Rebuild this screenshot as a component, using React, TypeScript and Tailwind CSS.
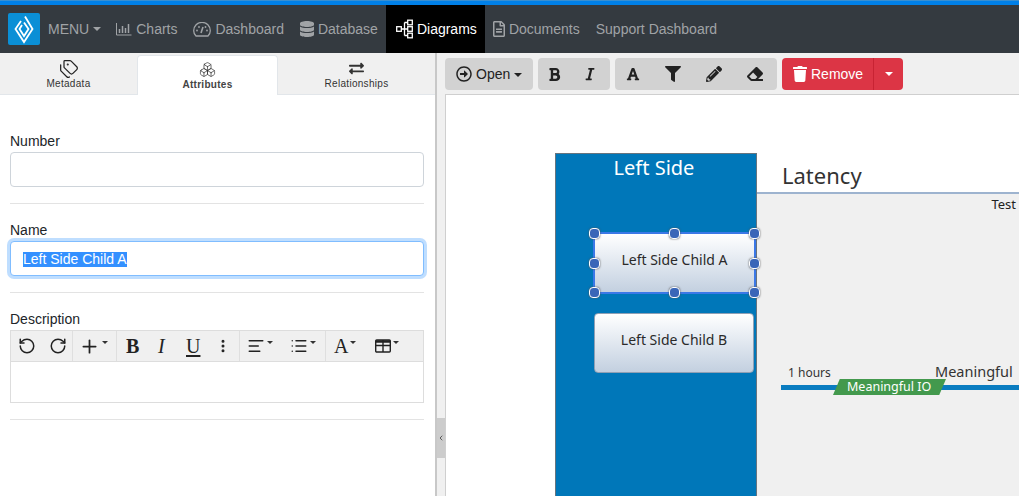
import React from "react";
import { FaDatabase, FaRegFileAlt, FaExchangeAlt, FaRegArrowAltCircleRight, FaBold, FaItalic, FaFont, FaFilter, FaPencilAlt, FaEraser, FaTrash } from "react-icons/fa";
import { RotateCcw, RotateCw, Plus, EllipsisVertical, AlignLeft, List, Tags, Boxes, ChevronLeft } from "lucide-react";

const Caret = ({ className = "" }: { className?: string }) => (
  <span className={"inline-block w-0 h-0 border-x-[4px] border-x-transparent border-t-[4px] border-t-current " + className} />
);

const TinyCaret = () => (
  <span className="inline-block w-0 h-0 border-x-[3px] border-x-transparent border-t-[3px] border-t-[#333] ml-[2px] mb-2" />
);

const ChartIcon = () => (
  <svg width="16" height="14" viewBox="0 0 16 14" fill="none" stroke="currentColor" strokeWidth="1">
    <path d="M.5 1v12h15" />
    <path d="M3.5 7v4M6.5 4v7M9.5 6v5M12.5 2v9" strokeWidth="1.5" />
  </svg>
);

const GaugeIcon = () => (
  <svg width="18" height="15" viewBox="0 0 18 15" fill="none" stroke="currentColor">
    <path d="M3 14C1.6 12.6.7 10.8.7 8.7a8.3 8.3 0 0 1 16.6 0c0 2.1-.9 3.9-2.3 5.3z" strokeWidth="1.3" />
    <path d="M8 11l2-6" strokeWidth="1.6" />
    <circle cx="4" cy="8.5" r=".9" fill="currentColor" stroke="none" />
    <circle cx="6" cy="5" r=".9" fill="currentColor" stroke="none" />
    <circle cx="14" cy="8.5" r=".9" fill="currentColor" stroke="none" />
    <circle cx="12.5" cy="5" r=".9" fill="currentColor" stroke="none" />
  </svg>
);

const DiagramIcon = () => (
  <svg width="17" height="20" viewBox="0 0 17 20" fill="none" stroke="currentColor" strokeWidth="1.3">
    <rect x=".7" y="7.7" width="4.6" height="4.6" />
    <rect x="11.7" y="1.2" width="4.6" height="4.6" />
    <rect x="11.7" y="7.7" width="4.6" height="4.6" />
    <rect x="11.7" y="14.2" width="4.6" height="4.6" />
    <path d="M5.3 10h6.4M8.5 3.5v13M8.5 3.5h3.2M8.5 16.5h3.2" />
  </svg>
);

const TableIcon = () => (
  <svg width="16" height="14" viewBox="0 0 16 14" fill="none" stroke="currentColor" strokeWidth="1.4">
    <rect x=".7" y="1" width="14.6" height="12" rx="1" />
    <path d="M.7 6.5h14.6M8 1v12" />
    <path d="M.7 2.5h14.6" strokeWidth="2.5" />
  </svg>
);

const Logo = () => (
  <div className="w-8 h-8 rounded-[2px] bg-[#0a8fd6] flex items-center justify-center">
    <svg width="20" height="30" viewBox="0 0 20 30" fill="none" stroke="white" strokeWidth="1.8">
      <path d="M11 2.5 L18.5 15 L10 28 L1.5 15 L7 7 M10 8.5 L14.5 15 L10 22 L5.5 15 L8 11" />
    </svg>
  </div>
);

const NavItem = ({ icon, label }: { icon?: React.ReactNode; label: string }) => (
  <div className="flex items-center gap-[4px] px-2">
    {icon}
    <span>{label}</span>
  </div>
);

const Tab = ({ icon, label, active }: { icon: React.ReactNode; label: string; active?: boolean }) => (
  <div
    className={
      "flex flex-col items-center pt-[4px] text-[10px] leading-[12px] tracking-[0.3px] " +
      (active
        ? "w-[141px] h-[40px] bg-white border border-b-0 border-[#e2e6ea] rounded-t-[4px] font-bold text-[#444]"
        : "flex-1 h-[39px] text-[#333]")
    }
  >
    <span className="h-[19px] flex items-center">{icon}</span>
    <span>{label}</span>
  </div>
);

const Divider = () => <div className="h-px bg-[#e3e3e3]" />;

const Group = ({ children, className = "" }: { children: React.ReactNode; className?: string }) => (
  <div className={"h-[32px] rounded-[4px] bg-[#d2d2d2] flex items-center text-[#222] " + className}>{children}</div>
);

const EdSection = ({ children, className = "" }: { children: React.ReactNode; className?: string }) => (
  <div className={"h-full flex items-center border-r border-[#dfdfdf] " + className}>{children}</div>
);

const Handle = ({ className }: { className: string }) => (
  <span className={"absolute w-[11px] h-[11px] rounded-[4px] bg-[#3a66b8] border-[1.5px] border-white shadow-[0_0_2px_#555] " + className} />
);

const Node = ({ label, selected }: { label: string; selected?: boolean }) => (
  <div
    className={
      "relative flex items-center justify-center text-[14px] text-[#2a2a2a] bg-gradient-to-b from-white to-[#c3d0e0] " +
      (selected ? "h-[62px] w-[163px] -ml-px border-2 border-[#3b78e7]" : "h-[60px] w-[160px] border border-[#8fa0b5] rounded-[4px]")
    }
  >
    <span className="mb-[7px]">{label}</span>
    {selected && (
      <>
        <Handle className="-left-[6px] -top-[6px]" />
        <Handle className="left-[74px] -top-[6px]" />
        <Handle className="-right-[6px] -top-[6px]" />
        <Handle className="-left-[6px] top-[24px]" />
        <Handle className="-right-[6px] top-[24px]" />
        <Handle className="-left-[6px] -bottom-[6px]" />
        <Handle className="left-[74px] -bottom-[6px]" />
        <Handle className="-right-[6px] -bottom-[6px]" />
      </>
    )}
  </div>
);

export default function App() {
  return (
    <div className="w-[1019px] h-[496px] overflow-hidden flex flex-col bg-white font-['Liberation_Sans',sans-serif] text-[14px] text-[#212529]">
      <div className="h-[5px] shrink-0 bg-[#0080e8] border-t border-t-[#3a8fd0]" />
      <nav className="h-[48px] shrink-0 bg-[#343a40] flex items-center text-[#a0a3a6]">
        <div className="ml-2 mr-2"><Logo /></div>
        <div className="flex items-center gap-[4px] pr-[8px]">
          <span>MENU</span>
          <Caret />
        </div>
        <div className="-ml-px flex items-center">
          <NavItem icon={<ChartIcon />} label="Charts" />
          <NavItem icon={<GaugeIcon />} label="Dashboard" />
          <NavItem icon={<FaDatabase className="w-[14px] h-[16px]" />} label="Database" />
        </div>
        <div className="h-full w-[99px] bg-black text-white flex items-center pl-[10px] gap-[4px]">
          <DiagramIcon />
          <span>Diagrams</span>
        </div>
        <NavItem icon={<FaRegFileAlt className="w-[12px] h-[16px]" />} label="Documents" />
        <NavItem label="Support Dashboard" />
      </nav>

      <div className="flex-1 flex min-h-0">
        <aside className="w-[435px] shrink-0 flex flex-col">
          <div className="h-[42px] bg-[#f0f0f0] border-b border-[#e2e6ea] flex items-end pl-[137px] relative">
            <div className="absolute left-0 bottom-0 w-[137px] flex">
              <Tab icon={<Tags size={20} strokeWidth={1.5} className="text-[#222]" />} label="Metadata" />
            </div>
            <div className="relative top-px">
              <Tab active icon={<Boxes size={17} strokeWidth={1} className="text-[#333]" />} label="Attributes" />
            </div>
            <Tab icon={<FaExchangeAlt size={15} className="text-[#333]" />} label="Relationships" />
          </div>
          <div className="pl-[10px] pr-[11px] pt-[37px]">
            <label className="block h-[20px] leading-[18px]">Number</label>
            <div className="h-[35px] rounded-[4px] border border-[#ced4da] bg-white" />
            <div className="mt-[16px]"><Divider /></div>
            <label className="block mt-[17px] h-[20px] leading-[18px]">Name</label>
            <div className="h-[35px] rounded-[4px] border border-[#80bdff] shadow-[0_0_0_3px_rgba(0,123,255,0.25)] bg-white flex items-center pl-[12px] pt-[2px]">
              <span className="bg-[#3390ff] text-white leading-[15px]">Left Side Child A</span>
            </div>
            <div className="mt-[16px]"><Divider /></div>
            <label className="block mt-[16px] h-[20px] leading-[20px]">Description</label>
            <div className="border border-[#dddddd] h-[73px] flex flex-col mt-[1px]">
              <div className="h-[31px] bg-[#f0f0f0] border-b border-[#dddddd] flex items-center text-[#222]">
                <EdSection className="w-[62px] pl-[7px] gap-[13px]">
                  <RotateCcw size={18} strokeWidth={2} />
                  <RotateCw size={18} strokeWidth={2} />
                </EdSection>
                <EdSection className="w-[44px] pl-[6px]">
                  <Plus size={21} strokeWidth={2} />
                  <TinyCaret />
                </EdSection>
                <EdSection className="w-[123px] pl-[9px] font-['Liberation_Serif',serif] text-[20px]">
                  <span className="w-[32px] font-bold">B</span>
                  <span className="w-[28px] italic">I</span>
                  <span className="w-[30px] underline underline-offset-[2px]">U</span>
                  <EllipsisVertical size={16} strokeWidth={2.5} className="-ml-[1px]" />
                </EdSection>
                <EdSection className="w-[86px] pl-[7px] gap-[17px]">
                  <span className="flex items-center"><AlignLeft size={18} strokeWidth={2} /><TinyCaret /></span>
                  <span className="flex items-center"><List size={18} strokeWidth={2} /><TinyCaret /></span>
                </EdSection>
                <div className="pl-[8px] flex items-center gap-[19px] font-['Liberation_Serif',serif] text-[20px]">
                  <span className="flex items-center">A<TinyCaret /></span>
                  <span className="flex items-center"><TableIcon /><TinyCaret /></span>
                </div>
              </div>
              <div className="flex-1 bg-white" />
            </div>
            <div className="mt-[16px]"><Divider /></div>
          </div>
        </aside>

        <div className="w-[2px] shrink-0 bg-[#c8c8c8]" />
        <div className="w-[8px] shrink-0 bg-[#f0f0f0] flex flex-col pt-[365px]">
          <div className="h-[40px] bg-[#cccccc] flex items-center justify-center text-[#222]">
            <ChevronLeft size={10} strokeWidth={2} />
          </div>
        </div>

        <main className="flex-1 min-w-0 flex flex-col">
          <div className="h-[42px] shrink-0 bg-[#f0f0f0] border-b border-[#cfcfcf] flex items-center gap-[5px] pt-[1px] text-[#222]">
            <Group className="w-[88px] pl-[11px]">
              <FaRegArrowAltCircleRight size={16} />
              <span className="ml-[4px]">Open</span>
              <Caret className="ml-[4px] mt-[1px]" />
            </Group>
            <Group className="w-[72px] pl-[9px] gap-[21px]">
              <FaBold size={15} />
              <FaItalic size={14} />
            </Group>
            <Group className="w-[162px] pl-[11px] gap-[25px]">
              <FaFont size={14} />
              <FaFilter size={16} />
              <FaPencilAlt size={16} />
              <FaEraser size={16} />
            </Group>
            <div className="w-[121px] h-[32px] rounded-[4px] bg-[#dc3545] text-white flex items-center">
              <div className="w-[92px] h-full flex items-center pl-[10px] gap-[3px] border-r border-[#c82333]">
                <FaTrash size={16} />
                <span>Remove</span>
              </div>
              <div className="flex-1 flex justify-center"><Caret /></div>
            </div>
          </div>

          <div className="flex-1 relative overflow-hidden bg-white border-l border-[#cfcfcf] font-['Noto_Sans',sans-serif]">
            <div className="absolute left-[109px] top-[58px] w-[202px] h-[350px] bg-[#0077b9] border border-[#66747f] flex flex-col items-center z-10">
              <span className="text-[20px] leading-[28px] text-white mr-[4px]">Left Side</span>
              <div className="mt-[50px] ml-[38px] self-start flex flex-col gap-[19px] relative">
                <Node selected label="Left Side Child A" />
                <Node label="Left Side Child B" />
              </div>
            </div>
            <div className="absolute left-[336px] top-[65px] text-[22px] leading-[30px] text-[#333]">Latency</div>
            <div className="absolute left-[311px] top-[97px] right-0 bottom-0 bg-[#f0f0f0] border-t-2 border-[#9db3cf]">
              <span className="absolute right-[3px] top-[2px] text-[13px] leading-[16px] text-[#222]">Test</span>
              <span className="absolute left-[31px] top-[171px] text-[12px] leading-[16px] text-[#333]">1 hours</span>
              <span className="absolute left-[178px] top-[167px] text-[14.5px] leading-[20px] text-[#333]">Meaningful</span>
              <div className="absolute left-[24px] right-0 top-[191px] h-[5px] bg-[#0a7cc0]" />
              <div className="absolute left-[76px] top-[185px] w-[113px] h-[16px] bg-[#43994d] text-white text-[12.5px] leading-[16px] pl-[14px] [clip-path:polygon(6%_0,100%_0,94%_100%,0_100%)]">Meaningful IO</div>
            </div>
          </div>
        </main>
      </div>
    </div>
  );
}
